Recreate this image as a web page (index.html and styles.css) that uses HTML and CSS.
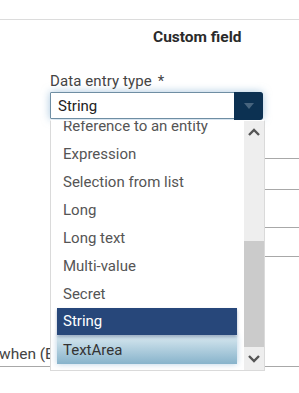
FILE: index.html
```html
<!DOCTYPE html>
<html>
<head>
<meta charset="utf-8">
<link rel="stylesheet" href="styles.css">
</head>
<body>
<div class="topbar"></div>
<h1 class="title">Custom field</h1>
<div class="field">
  <div class="label">Data entry type <span class="req">*</span></div>
  <div class="select">
    <span class="value">String</span>
    <span class="btn"><svg width="10" height="6" viewBox="0 0 10 6"><path d="M0 0H10L5 6Z" fill="#47647e"/></svg></span>
  </div>
</div>
<div class="bgform">
  <div class="line l1"></div>
  <div class="line l2"></div>
  <div class="line l3"></div>
  <div class="line l4"></div>
  <div class="row-when"><span class="when">when (E</span></div>
</div>
<div class="dropdown">
  <ul class="items">
    <li>Reference to an entity</li>
    <li>Expression</li>
    <li>Selection from list</li>
    <li>Long</li>
    <li>Long text</li>
    <li>Multi-value</li>
    <li>Secret</li>
    <li class="selected">String</li>
    <li class="hover">TextArea</li>
  </ul>
  <div class="scrollbar">
    <div class="arrow up"><svg width="12" height="8" viewBox="0 0 12 8"><path d="M1 7L6 2L11 7" fill="none" stroke="#555" stroke-width="2.4"/></svg></div>
    <div class="track"><div class="thumb"></div></div>
    <div class="arrow down"><svg width="12" height="8" viewBox="0 0 12 8"><path d="M1 1L6 6L11 1" fill="none" stroke="#555" stroke-width="2.4"/></svg></div>
  </div>
</div>
</body>
</html>
```
FILE: styles.css
```css
html, body {
  margin: 0;
  padding: 0;
  background: #fff;
  font-family: Roboto, "Liberation Sans", sans-serif;
  position: relative;
  overflow: hidden;
  width: 299px;
  height: 393px;
}
.topbar {
  height: 19px;
  border-bottom: 1px solid #dcdcdc;
}
.title {
  margin: 0;
  padding: 9px 0 0 153px;
  font-size: 15.5px;
  font-weight: 700;
  color: #2a2a2a;
  line-height: 17px;
}
.field {
  padding: 26px 0 0 50px;
}
.label {
  font-size: 15px;
  color: #444;
  line-height: 18px;
  height: 20px;
  letter-spacing: 0.1px;
}
.req {
  margin-left: 2px;
}
.select {
  width: 213px;
  height: 27px;
  box-sizing: border-box;
  border: 1px solid #6f8ea3;
  border-radius: 1px 3px 3px 1px;
  display: flex;
  align-items: center;
  box-shadow: 0 0 9px rgba(110, 160, 200, 0.6);
  background: #fff;
}
.value {
  flex: 1;
  padding-left: 7px;
  font-size: 15px;
  color: #222;
}
.btn {
  width: 29px;
  height: 28px;
  margin: -1px -1px -1px 0;
  background: #0c3152;
  border-radius: 0 3px 3px 0;
  display: flex;
  align-items: center;
  justify-content: center;
}
.bgform {
  position: relative;
}
.line {
  margin-left: 150px;
  border-bottom: 1px solid #a8a8a8;
}
.l1 { height: 39px; }
.l2 { height: 30px; }
.l3 { height: 37px; }
.l4 { height: 28px; }
.row-when {
  height: 109px;
  border-bottom: 1px solid #a8a8a8;
  display: flex;
  align-items: flex-end;
}
.when {
  font-size: 15.5px;
  color: #444;
  line-height: 18px;
  margin-left: -1px;
  padding-bottom: 3px;
}
.dropdown {
  position: absolute;
  left: 50px;
  top: 120px;
  width: 215px;
  height: 251px;
  box-sizing: border-box;
  border: 1px solid #dadada;
  border-top: 1px solid #fff;
  background: #fff;
  display: flex;
  overflow: hidden;
}
.items {
  list-style: none;
  margin: -9px 0 0 0;
  padding: 0 0 0 6px;
  width: 181px;
}
.items li {
  height: 28px;
  line-height: 28px;
  padding-left: 6px;
  font-size: 15px;
  color: #555;
  white-space: nowrap;
}
.items li.selected {
  background: #27477a;
  color: #fff;
  height: 27px;
  line-height: 27px;
  box-shadow: 0 2px 3px rgba(20, 50, 100, 0.35);
  position: relative;
  z-index: 1;
}
.items li.hover {
  background: linear-gradient(#d6e7ef, #87b3cb);
  color: #333;
  margin-top: 1px;
  box-shadow: 0 0 6px rgba(110, 160, 200, 0.5);
}
.scrollbar {
  margin-left: 7px;
  margin-top: -1px;
  width: 20px;
  background: #eeeeee;
  display: flex;
  flex-direction: column;
}
.arrow {
  height: 23px;
  display: flex;
  align-items: center;
  justify-content: center;
}
.track {
  flex: 1;
  display: flex;
  flex-direction: column;
  justify-content: flex-end;
}
.thumb {
  height: 106px;
  background: #cbcbcb;
}
```
